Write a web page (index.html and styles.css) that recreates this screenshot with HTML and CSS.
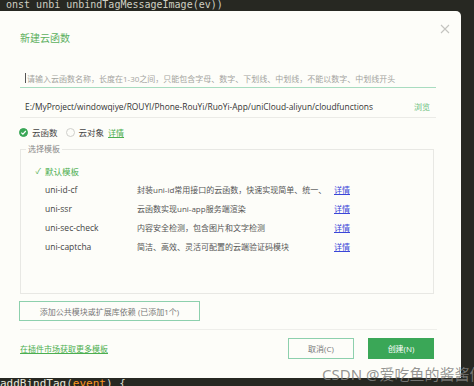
FILE: index.html
```html
<!DOCTYPE html>
<html lang="zh-CN">
<head>
  <meta charset="UTF-8">
  <title>新建云函数</title>
  <link rel="stylesheet" href="styles.css">
</head>
<body>

  <div class="code-top">&nbsp;onst&nbsp;unbi&nbsp;unbindTagMessageImage(ev))</div>

  <div class="stage">
    <div class="dialog">
      <div class="dlg-head">
        <span class="dlg-title">新建云函数</span>
        <svg class="close" width="10" height="10" viewBox="0 0 10 10">
          <path d="M1 1L9 9M9 1L1 9" stroke="#c4c4c0" stroke-width="1.1" fill="none"/>
        </svg>
      </div>

      <div class="name-input">
        <span class="caret"></span>
        <span class="placeholder">请输入云函数名称，长度在1-30之间，只能包含字母、数字、下划线、中划线，不能以数字、中划线开头</span>
      </div>

      <div class="path-row">
        <span class="path">E:/MyProject/windowqiye/ROUYI/Phone-RouYi/RuoYi-App/uniCloud-aliyun/cloudfunctions</span>
        <span class="browse">浏览</span>
      </div>

      <div class="type-row">
        <span class="radio checked">
          <svg width="9" height="9" viewBox="0 0 9 9"><path d="M2.3 4.6L3.9 6.1L6.8 3" stroke="#fff" stroke-width="1.2" fill="none"/></svg>
        </span>
        <span class="type-label">云函数</span>
        <span class="radio"></span>
        <span class="type-label">云对象</span>
        <a class="link-green detail">详情</a>
      </div>

      <fieldset class="templates">
        <legend>选择模板</legend>
        <div class="tpl-row active">
          <span class="tick">✓</span>
          <span class="tpl-name">默认模板</span>
          <span></span>
          <span></span>
        </div>
        <div class="tpl-row">
          <span></span>
          <span class="tpl-name">uni-id-cf</span>
          <span class="tpl-desc">封装uni-id常用接口的云函数，快速实现简单、统一、</span>
          <a class="link-blue">详情</a>
        </div>
        <div class="tpl-row">
          <span></span>
          <span class="tpl-name">uni-ssr</span>
          <span class="tpl-desc">云函数实现uni-app服务端渲染</span>
          <a class="link-blue">详情</a>
        </div>
        <div class="tpl-row">
          <span></span>
          <span class="tpl-name">uni-sec-check</span>
          <span class="tpl-desc">内容安全检测，包含图片和文字检测</span>
          <a class="link-blue">详情</a>
        </div>
        <div class="tpl-row">
          <span></span>
          <span class="tpl-name">uni-captcha</span>
          <span class="tpl-desc">简洁、高效、灵活可配置的云端验证码模块</span>
          <a class="link-blue">详情</a>
        </div>
      </fieldset>

      <button class="add-dep">添加公共模块或扩展库依赖 (已添加1个)</button>

      <div class="divider"></div>

      <div class="dlg-foot">
        <a class="link-green">在插件市场获取更多模板</a>
        <div class="actions">
          <button class="btn-cancel">取消(C)</button>
          <button class="btn-create">创建(N)</button>
        </div>
      </div>
    </div>
  </div>

  <div class="code-bottom"><span class="fn">addBindTag</span><span class="pn">(</span><span class="arg">event</span><span class="pn">)</span> {</div>

  <div class="watermark">CSDN @爱吃鱼的酱酱仔</div>

</body>
</html>
```

FILE: styles.css
```css
body {
  margin: 0;
  width: 474px;
  height: 386px;
  overflow: hidden;
  background: #272822;
  font-family: "Open Sans", "Noto Sans CJK SC", sans-serif;
  font-size: 8px;
  color: #444;
  position: relative;
}
.code-top {
  height: 11px;
  overflow: hidden;
  font-family: "DejaVu Sans Mono", monospace;
  font-size: 10px;
  line-height: 9px;
  color: #cfcfc2;
  white-space: pre;
}
.stage {
  display: flex;
}
.dialog {
  width: 461px;
  height: 367px;
  box-sizing: border-box;
  background: #fdfdf9;
  border-top-right-radius: 5px;
  padding: 0 25px 0 20px;
  display: flex;
  flex-direction: column;
}
.dlg-head {
  display: flex;
  justify-content: space-between;
  align-items: center;
  height: 14px;
  margin-top: 20px;
  margin-right: -14px;
}
.dlg-title {
  font-size: 10px;
  color: #5cb05f;
  line-height: 14px;
}
.close {
  margin-top: -18px;
}
.name-input {
  display: flex;
  align-items: center;
  height: 18px;
  margin-top: 24px;
  border-bottom: 1px solid #a8dcc0;
  padding-left: 5px;
}
.caret {
  width: 1px;
  height: 10px;
  background: #555;
  margin-right: 1px;
}
.placeholder {
  color: #a4a4a0;
  white-space: nowrap;
}
.path-row {
  display: flex;
  justify-content: space-between;
  line-height: 14px;
  padding: 12px 6px 3px 5px;
  border-bottom: 1px solid #ebebe7;
}
.path {
  color: #333;
  font-size: 8.4px;
}
.browse {
  color: #6cbf7e;
}
.type-row {
  display: flex;
  align-items: center;
  height: 14px;
  margin-top: 7px;
}
.radio {
  width: 9px;
  height: 9px;
  border-radius: 50%;
  box-sizing: border-box;
  border: 1px solid #cfcfcb;
  margin: 0 4px 0 0;
  display: inline-flex;
}
.radio.checked {
  background: #3aa757;
  border-color: #3aa757;
  margin-left: -1px;
}
.radio.checked svg {
  margin: -1px;
}
.type-label {
  color: #444;
  margin-right: 8px;
  font-size: 8.5px;
}
.link-green {
  color: #4caf50;
  text-decoration: underline;
}
.detail {
  margin-left: -4px;
}
.templates {
  margin: 3px 0 0;
  padding: 5px 0 37px;
  border: 1px solid #e8e8e4;
  width: 414px;
  box-sizing: border-box;
}
.templates legend {
  margin-left: 5px;
  padding: 0 2px;
  color: #888;
  line-height: 14px;
}
.tpl-row {
  display: grid;
  grid-template-columns: 24px 92px 197px auto;
  height: 19px;
  align-items: center;
}
.tpl-row.active {
  color: #4caf50;
}
.tick {
  text-align: right;
  padding-right: 4px;
  color: #4caf50;
}
.tpl-name {
  font-size: 8.5px;
}
.tpl-desc {
  color: #555;
  white-space: nowrap;
}
.link-blue {
  color: #3a46d8;
  text-decoration: underline;
}
button {
  font-family: "Open Sans", "Noto Sans CJK SC", sans-serif;
  font-size: 8px;
  cursor: pointer;
  padding: 0;
}
.add-dep {
  width: 181px;
  height: 20px;
  margin-top: 7px;
  margin-left: -1px;
  background: #fdfdf9;
  border: 1px solid #8dd0ad;
  color: #777;
}
.divider {
  height: 1px;
  background: #eeeeea;
  margin-top: 8px;
  margin-right: -1px;
}
.dlg-foot {
  display: flex;
  justify-content: space-between;
  align-items: center;
  margin-top: 8px;
  padding-right: 2px;
}
.actions {
  display: flex;
  gap: 14px;
}
.actions button {
  width: 66px;
  height: 21px;
}
.btn-cancel {
  background: #fdfdf9;
  border: 1px solid #8dd0ad;
  color: #777;
}
.btn-create {
  background: #3aa757;
  border: 1px solid #3aa757;
  color: #fff;
}
.code-bottom {
  font-family: "DejaVu Sans Mono", monospace;
  font-size: 11px;
  line-height: 14px;
  color: #d8d8cc;
  white-space: pre;
  margin-top: -1px;
}
.code-bottom .fn {
  color: #e6e6da;
}
.code-bottom .arg {
  color: #fd971f;
}
.watermark {
  position: absolute;
  left: 322px;
  top: 365px;
  font-family: "Noto Sans", "Noto Sans CJK SC", sans-serif;
  font-size: 15px;
  line-height: 18px;
  color: rgba(130, 130, 128, 0.85);
  white-space: nowrap;
}
```
